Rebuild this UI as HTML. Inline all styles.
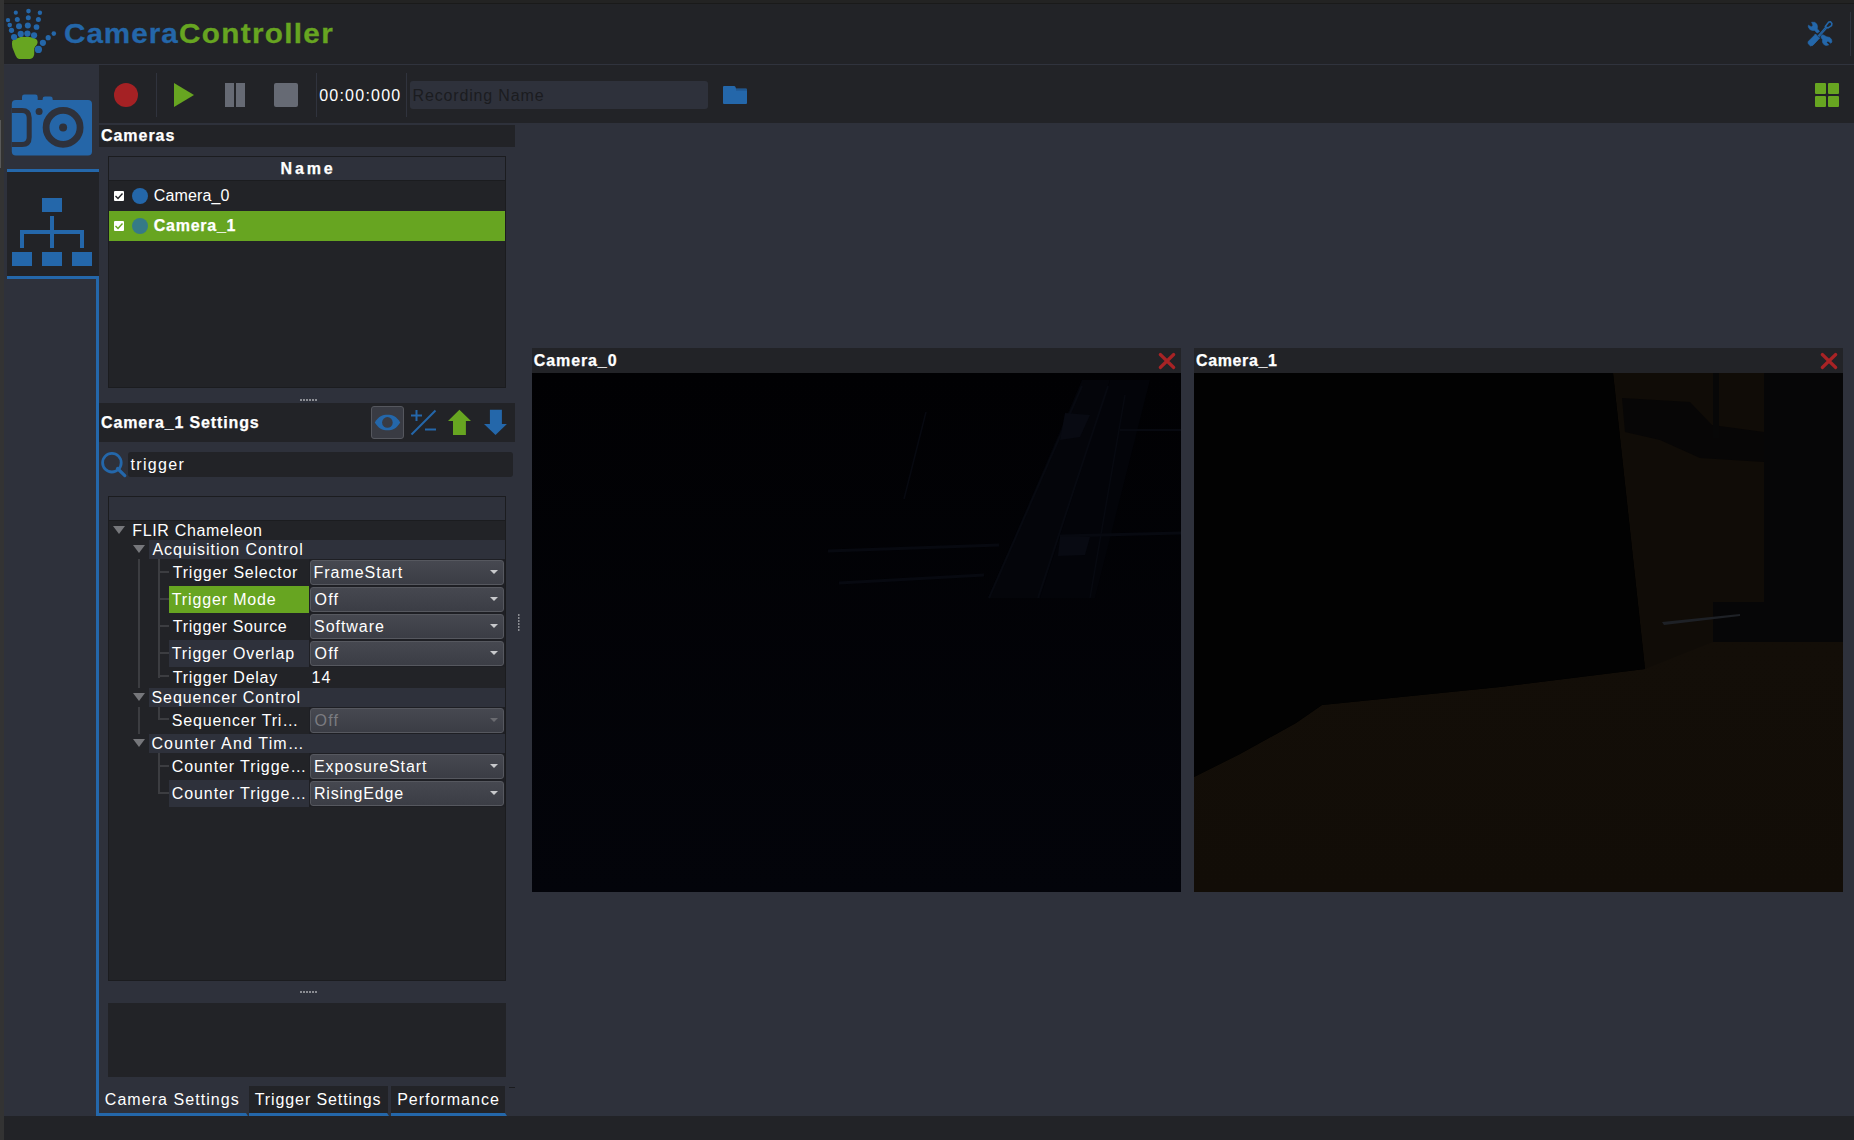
<!DOCTYPE html>
<html><head><meta charset="utf-8">
<style>
html,body{margin:0;padding:0;}
body{width:1854px;height:1140px;overflow:hidden;position:relative;background:#2e313b;font-family:"Liberation Sans",sans-serif;color:#ffffff;}
div{box-sizing:border-box;}
.a{position:absolute;}
.t{position:absolute;white-space:nowrap;font-size:16px;line-height:16px;}
.b{font-weight:bold;-webkit-text-stroke:0.25px #ffffff;}
.dk{background:#222327;}
.dd{position:absolute;left:309px;width:196px;height:27px;background:#1e1f24;}
.dd .in{position:absolute;left:1px;top:1px;width:194px;height:25px;border:1px solid #56585f;border-radius:3px;background:linear-gradient(#464850,#3b3d45);}
.dd .ar{position:absolute;left:181px;top:10.8px;width:0;height:0;border-left:4px solid transparent;border-right:4px solid transparent;border-top:4.8px solid #c8c9cc;}
.vl{position:absolute;width:2px;background:#3c3d41;}
.hl{position:absolute;height:2px;background:#3c3d41;}
.tri{position:absolute;width:0;height:0;border-left:6px solid transparent;border-right:6px solid transparent;border-top:8px solid #76777b;}
.alt{position:absolute;background:#2e313b;}
</style></head><body>
<!-- frame -->
<div class="a" style="left:0;top:0;width:4px;height:1140px;background:#333333;"></div><div class="a" style="left:0;top:120px;width:1px;height:48px;background:#585858;"></div>
<div class="a" style="left:4px;top:0;width:1850px;height:3px;background:#232323;"></div>
<div class="a" style="left:4px;top:3px;width:1850px;height:1px;background:#1a1a1a;"></div>
<!-- header -->
<div class="a dk" style="left:4px;top:4px;width:1850px;height:60px;"></div>
<div class="a" style="left:4px;top:64px;width:1850px;height:1px;background:#30333d;"></div>
<div class="a" style="left:1850px;top:12px;width:1px;height:44px;background:#30333d;"></div>
<!-- toolbar -->
<div class="a dk" style="left:99px;top:65px;width:1755px;height:58px;"></div>
<!-- logo -->
<svg class="a" style="left:0;top:0;" width="64" height="64" viewBox="0 0 64 64">
<path fill="#67a521" d="M12.2,41.0 Q14.5,38.2 18.1,38.0 Q21,36.6 24.3,36.9 Q27.5,36.3 31.0,37.2 Q34.5,37.6 36.6,39.6 Q38.6,42.2 36.6,45.0 Q34.6,46.6 34.3,48.5 L34.2,54.6 Q33.4,58.8 30.0,58.9 L19.0,58.9 Q17.0,58.8 15.6,55.4 L12.4,47.6 Q11.6,44.2 12.2,41.0 Z"/>
<g fill="#2467aa"><circle cx="15.8" cy="12.7" r="2.1"/><circle cx="28.5" cy="11.1" r="2.3"/><circle cx="39.9" cy="12.7" r="2.2"/><circle cx="8.0" cy="20.1" r="2.2"/><circle cx="17.3" cy="19.4" r="2.5"/><circle cx="28.3" cy="17.8" r="2.5"/><circle cx="38.4" cy="19.5" r="2.5"/><circle cx="9.7" cy="25.1" r="2.3"/><circle cx="19.0" cy="26.2" r="3.0"/><circle cx="27.8" cy="25.4" r="3.0"/><circle cx="36.5" cy="27.0" r="2.85"/><circle cx="11.5" cy="30.3" r="2.6"/><circle cx="20.7" cy="33.9" r="3.1"/><circle cx="27.4" cy="33.6" r="3.1"/><circle cx="34.1" cy="35.3" r="3.1"/><circle cx="14.1" cy="37.0" r="3.1"/><circle cx="53.8" cy="33.6" r="2.3"/><circle cx="48.2" cy="37.7" r="2.6"/><circle cx="42.9" cy="42.8" r="3.1"/><circle cx="38.4" cy="49.4" r="3.6"/></g>
</svg>
<div class="t b" style="left:64px;top:19.5px;font-size:28px;line-height:28px;color:#2467aa;letter-spacing:0.9px;transform:scaleX(1.06);transform-origin:0 0;-webkit-text-stroke:0.3px #2467aa;">Camera</div><div class="t b" style="left:178.5px;top:19.5px;font-size:28px;line-height:28px;color:#67a521;letter-spacing:1.25px;transform:scaleX(1.06);transform-origin:0 0;-webkit-text-stroke:0.3px #67a521;">Controller</div>
<!-- tools icon -->
<svg class="a" style="left:1806px;top:20px;" width="28" height="28" viewBox="0 0 28 28">
<g fill="#2467aa">
<path d="M5.58,2.19 L8.74,2.37 L10.84,4.12 L11.54,6.58 L11.19,9.04 L12.95,10.44 L13.47,11.49 L11.54,12.89 L10.49,12.54 L8.74,10.44 L6.28,10.44 L3.82,9.39 L2.25,6.93 L2.42,5.18 L5.4,6.9 L7.0,5.2 Z" stroke="#2467aa" stroke-width="0.6" stroke-linejoin="round"/>
<path d="M15.05,16.05 L16.81,14.65 L20.67,16.75 L23.82,17.46 L25.58,19.56 L25.93,22.02 L24.88,23.3 L21.8,21.0 L20.6,22.6 L22.77,24.9 L19.96,25.53 L17.86,24.47 L16.46,22.37 L16.46,19.56 L15.05,17.46 Z" stroke="#2467aa" stroke-width="0.6" stroke-linejoin="round"/>
<path d="M2.07,21.67 L8.74,15.0 L9.44,13.95 L13.65,18.16 L12.25,19.56 L6.98,25.18 L4.53,25.88 L2.25,23.77 Z" stroke="#2467aa" stroke-width="0.8" stroke-linejoin="round"/>
</g>
<path d="M12.6,16.2 L20.2,7.6" stroke="#2467aa" stroke-width="2.4"/>
<path d="M13.2,15.6 L19.8,8.2" stroke="#1d4f84" stroke-width="0.7"/>
<path d="M19.26,6.58 L22.77,2.02 L24.53,1.84 L25.93,3.42 L25.58,5.53 L22.07,7.98 Z" fill="#222327" stroke="#2467aa" stroke-width="1.5" stroke-linejoin="round"/>
</svg>
<!-- toolbar buttons -->
<div class="a" style="left:114px;top:83px;width:24px;height:24px;border-radius:50%;background:#a52124;"></div>
<div class="a" style="left:156px;top:73px;width:1px;height:44px;background:#30333d;"></div>
<svg class="a" style="left:173px;top:82px;" width="22" height="26" viewBox="0 0 22 26"><polygon points="1,1 21,13 1,25" fill="#67a521"/></svg>
<div class="a" style="left:225px;top:83px;width:9px;height:24px;background:#666a74;"></div>
<div class="a" style="left:236px;top:83px;width:9px;height:24px;background:#666a74;"></div>
<div class="a" style="left:274px;top:83px;width:24px;height:24px;border-radius:2px;background:#666a74;"></div>
<div class="a" style="left:316px;top:73px;width:1px;height:44px;background:#30333d;"></div>
<div class="t" style="left:319.2px;top:87.8px;letter-spacing:1.23px;color:#ffffff;">00:00:000</div>
<div class="a" style="left:406px;top:73px;width:1px;height:44px;background:#30333d;"></div>
<div class="a" style="left:410px;top:81px;width:298px;height:28px;border-radius:3px;background:#2e313b;"></div>
<div class="t" style="left:412.5px;top:87.7px;letter-spacing:0.85px;color:#1b1c20;">Recording Name</div>
<svg class="a" style="left:723px;top:86px;" width="24" height="18" viewBox="0 0 24 18"><path d="M0,1 Q0,0 1,0 L11,0 Q12,0 12.5,1 L13,2.5 L23,2.5 Q24,2.5 24,3.5 L24,17 Q24,18 23,18 L1,18 Q0,18 0,17 Z" fill="#2467aa"/><rect x="13" y="3.4" width="11" height="1" fill="#1d4d80"/></svg>
<svg class="a" style="left:1815px;top:83px;" width="24" height="24" viewBox="0 0 24 24"><g fill="#67a521"><rect x="0" y="0" width="11" height="11" rx="1"/><rect x="13" y="0" width="11" height="11" rx="1"/><rect x="0" y="13" width="11" height="11" rx="1"/><rect x="13" y="13" width="11" height="11" rx="1"/></g></svg>
<!-- sidebar -->
<svg class="a" style="left:0;top:88px;" width="100" height="72" viewBox="0 88 100 72">
<path fill="#2566a8" d="M22,100 L22,97 Q22,94.6 24.4,94.6 L35.3,94.6 Q37.7,94.6 37.7,97 L37.7,100 L42.6,100 L42.6,99 Q42.6,96.6 45,96.6 L50.3,96.6 Q52.7,96.6 52.7,99 L52.7,100 L88,100 Q92,100 92,104 L92,151.4 Q92,155.4 88,155.4 L15.8,155.4 Q11.8,155.4 11.8,151.4 L11.8,104 Q11.8,100 15.8,100 Z"/>
<path fill="none" stroke="#2e313b" stroke-width="5" d="M11.8,110.5 L22,110.5 Q29.2,110.5 29.2,117.7 L29.2,137.3 Q29.2,144.6 22,144.6 L11.8,144.6"/>
<circle cx="39.1" cy="111.6" r="3.5" fill="#2e313b"/>
<circle cx="63.1" cy="127.4" r="17" fill="none" stroke="#2e313b" stroke-width="6.8"/>
<circle cx="63.1" cy="127.4" r="4" fill="#2e313b"/>
</svg>
<div class="a" style="left:7px;top:169px;width:92px;height:3px;background:#2467aa;"></div>
<div class="a dk" style="left:7px;top:172px;width:92px;height:104px;"></div>
<div class="a" style="left:7px;top:276px;width:92px;height:3px;background:#2467aa;"></div>
<div class="a" style="left:96px;top:276px;width:3px;height:840px;background:#2467aa;"></div>
<svg class="a" style="left:0;top:190px;" width="100" height="80" viewBox="0 190 100 80">
<g fill="#2467aa">
<rect x="42" y="198" width="20" height="14"/>
<rect x="50" y="216" width="4" height="32"/>
<rect x="20" y="230" width="64" height="4"/>
<rect x="20" y="230" width="4" height="18"/>
<rect x="80" y="230" width="4" height="18"/>
<rect x="12" y="252" width="20" height="14"/>
<rect x="42" y="252" width="20" height="14"/>
<rect x="72" y="252" width="20" height="14"/>
</g></svg>
<!-- cameras panel -->
<div class="a dk" style="left:99px;top:125px;width:416px;height:22px;"></div>
<div class="t b" style="left:101.0px;top:128.0px;letter-spacing:0.96px;">Cameras</div>
<div class="a" style="left:108px;top:156px;width:398px;height:232px;border:1px solid #1b1c1f;background:#222327;"></div>
<div class="a" style="left:109px;top:157px;width:396px;height:23px;background:#2e313b;"></div>
<div class="a" style="left:109px;top:180px;width:396px;height:1px;background:#1b1c1f;"></div>
<div class="t b" style="left:280.6px;top:161.2px;letter-spacing:2.86px;">Name</div>
<div class="a" style="left:109px;top:211px;width:396px;height:30px;background:#67a521;"></div>
<div class="a" style="left:114px;top:191px;width:10px;height:10px;background:#ffffff;border-radius:1px;"></div>
<svg class="a" style="left:114px;top:191px;" width="10" height="10" viewBox="0 0 10 10"><path d="M1.5,5 L4,7.5 L8.5,2.5" fill="none" stroke="#222327" stroke-width="1.4"/></svg>
<div class="a" style="left:132px;top:188px;width:16px;height:16px;border-radius:50%;background:#2467aa;"></div>
<div class="t" style="left:153.8px;top:188.2px;letter-spacing:0.14px;">Camera_0</div>
<div class="a" style="left:114px;top:221px;width:10px;height:10px;background:#ffffff;border-radius:1px;"></div>
<svg class="a" style="left:114px;top:221px;" width="10" height="10" viewBox="0 0 10 10"><path d="M1.5,5 L4,7.5 L8.5,2.5" fill="none" stroke="#67a521" stroke-width="1.4"/></svg>
<div class="a" style="left:132px;top:218px;width:16px;height:16px;border-radius:50%;background:#357a87;"></div>
<div class="t b" style="left:153.8px;top:218.2px;letter-spacing:0.74px;">Camera_1</div>
<!-- splitter handle -->
<svg class="a" style="left:298px;top:397px;" width="22" height="6" viewBox="0 0 22 6"><g fill="#8a8c92"><rect x="2" y="2" width="2" height="2"/><rect x="5" y="2" width="2" height="2"/><rect x="8" y="2" width="2" height="2"/><rect x="11" y="2" width="2" height="2"/><rect x="14" y="2" width="2" height="2"/><rect x="17" y="2" width="2" height="2"/></g></svg>
<!-- settings -->
<div class="a dk" style="left:99px;top:403px;width:416px;height:39px;"></div>
<div class="t b" style="left:101.0px;top:414.9px;letter-spacing:0.85px;">Camera_1 Settings</div>
<div class="a" style="left:371px;top:406px;width:33px;height:33px;border:1px solid #55575e;border-radius:3px;background:#393b43;"></div>
<svg class="a" style="left:370px;top:405px;" width="140" height="36" viewBox="370 405 140 36">
<path d="M374.8,422.4 C378.5,416.5 382.5,414.8 387.5,414.8 C392.5,414.8 396.5,416.5 400.2,422.4 C396.5,428.5 392.5,430.2 387.5,430.2 C382.5,430.2 378.5,428.5 374.8,422.4 Z" fill="#2467aa"/>
<circle cx="387.4" cy="422.4" r="5.3" fill="#393b43"/>
<g stroke="#2467aa" stroke-width="2" fill="none"><path d="M411,415.5 L422,415.5 M416.5,410 L416.5,421"/><path d="M425,429.5 L436,429.5"/><path d="M411.5,434.5 L435.5,410.5"/></g>
<polygon fill="#67a521" points="459.4,409.8 471,420.9 465.9,420.9 465.9,435.1 453,435.1 453,420.9 448,420.9"/>
<polygon fill="#2467aa" points="489.9,409.8 501.9,409.8 501.9,423.9 506.9,423.9 495.5,435.1 484,423.9 489.9,423.9"/>
</svg>
<svg class="a" style="left:100px;top:450px;" width="28" height="28" viewBox="100 450 28 28"><circle cx="111.9" cy="462.7" r="9.3" fill="none" stroke="#2467aa" stroke-width="2.8"/><path d="M117.5,468.5 L124.8,475.6" stroke="#2467aa" stroke-width="3.2" stroke-linecap="round"/></svg>
<div class="a dk" style="left:128px;top:452px;width:385px;height:25px;border-radius:3px;"></div>
<div class="t" style="left:130.6px;top:457.2px;letter-spacing:1.30px;">trigger</div>
<!-- property tree -->
<div class="a" style="left:108px;top:496px;width:398px;height:485px;border:1px solid #1b1c1f;background:#222327;"></div>
<div class="a" style="left:109px;top:497px;width:396px;height:23px;background:#2e313b;"></div>
<div class="a" style="left:109px;top:520px;width:396px;height:1px;background:#1b1c1f;"></div>
<!-- alt rows -->
<div class="alt" style="left:149px;top:540px;width:356px;height:19px;"></div>
<div class="a" style="left:169px;top:586px;width:336px;height:27px;background:#67a521;"></div>
<div class="alt" style="left:169px;top:640px;width:336px;height:27px;"></div>
<div class="alt" style="left:149px;top:688px;width:356px;height:19px;"></div>
<div class="alt" style="left:149px;top:734px;width:356px;height:19px;"></div>
<div class="alt" style="left:169px;top:780px;width:336px;height:27px;"></div>
<!-- tree lines -->
<div class="vl" style="left:138px;top:559px;height:129px;"></div>
<div class="vl" style="left:138px;top:707px;height:27px;"></div>
<div class="vl" style="left:158px;top:559px;height:119px;"></div>
<div class="hl" style="left:158px;top:571px;width:11px;"></div>
<div class="hl" style="left:158px;top:598px;width:11px;"></div>
<div class="hl" style="left:158px;top:625px;width:11px;"></div>
<div class="hl" style="left:158px;top:652px;width:11px;"></div>
<div class="hl" style="left:158px;top:675px;width:11px;"></div>
<div class="vl" style="left:158px;top:707px;height:13px;"></div>
<div class="hl" style="left:158px;top:718px;width:11px;"></div>
<div class="vl" style="left:158px;top:753px;height:41px;"></div>
<div class="hl" style="left:158px;top:765px;width:11px;"></div>
<div class="hl" style="left:158px;top:792px;width:11px;"></div>
<!-- triangles -->
<div class="tri" style="left:113px;top:526px;"></div>
<div class="tri" style="left:133px;top:545px;"></div>
<div class="tri" style="left:133px;top:693px;"></div>
<div class="tri" style="left:133px;top:739px;"></div>
<!-- labels -->
<div class="t" style="left:132.2px;top:523.0px;letter-spacing:0.68px;">FLIR Chameleon</div>
<div class="t" style="left:152.4px;top:542.0px;letter-spacing:0.94px;">Acquisition Control</div>
<div class="t" style="left:172.8px;top:565.1px;letter-spacing:0.76px;">Trigger Selector</div>
<div class="t" style="left:171.8px;top:592.0px;letter-spacing:0.85px;">Trigger Mode</div>
<div class="t" style="left:172.8px;top:619.0px;letter-spacing:0.67px;">Trigger Source</div>
<div class="t" style="left:171.8px;top:646.0px;letter-spacing:0.84px;">Trigger Overlap</div>
<div class="t" style="left:172.8px;top:670.0px;letter-spacing:0.75px;">Trigger Delay</div>
<div class="t" style="left:151.4px;top:690.0px;letter-spacing:0.96px;">Sequencer Control</div>
<div class="t" style="left:171.8px;top:713.0px;letter-spacing:0.83px;">Sequencer Tri…</div>
<div class="t" style="left:151.4px;top:735.9px;letter-spacing:1.15px;">Counter And Tim…</div>
<div class="t" style="left:171.8px;top:758.9px;letter-spacing:0.90px;">Counter Trigge…</div>
<div class="t" style="left:171.8px;top:786.0px;letter-spacing:0.90px;">Counter Trigge…</div>
<!-- dropdowns -->
<div class="dd" style="top:559px;"><div class="in"></div><div class="ar"></div></div>
<div class="t" style="left:313.6px;top:564.8px;letter-spacing:0.96px;">FrameStart</div>
<div class="dd" style="top:586px;"><div class="in"></div><div class="ar"></div></div>
<div class="t" style="left:314.6px;top:592.0px;letter-spacing:1.20px;">Off</div>
<div class="dd" style="top:613px;"><div class="in"></div><div class="ar"></div></div>
<div class="t" style="left:314.0px;top:619.0px;letter-spacing:0.97px;">Software</div>
<div class="dd" style="top:640px;"><div class="in"></div><div class="ar"></div></div>
<div class="t" style="left:314.6px;top:646.0px;letter-spacing:1.20px;">Off</div>
<div class="t" style="left:311.4px;top:669.7px;letter-spacing:1.10px;">14</div>
<div class="dd" style="top:707px;"><div class="in"></div><div class="ar" style="border-top-color:#6a6b70;"></div></div>
<div class="t" style="left:314.6px;top:712.7px;letter-spacing:1.20px;color:#7b7c81;">Off</div>
<div class="dd" style="top:753px;"><div class="in"></div><div class="ar"></div></div>
<div class="t" style="left:314.0px;top:758.6px;letter-spacing:0.92px;">ExposureStart</div>
<div class="dd" style="top:780px;"><div class="in"></div><div class="ar"></div></div>
<div class="t" style="left:314.0px;top:785.7px;letter-spacing:0.80px;">RisingEdge</div>
<!-- vertical splitter handle -->
<svg class="a" style="left:516px;top:612px;" width="6" height="22" viewBox="0 0 6 22"><g fill="#8a8c92"><rect x="2" y="2" width="1.5" height="2"/><rect x="2" y="5" width="1.5" height="2"/><rect x="2" y="8" width="1.5" height="2"/><rect x="2" y="11" width="1.5" height="2"/><rect x="2" y="14" width="1.5" height="2"/><rect x="2" y="17" width="1.5" height="2"/></g></svg>
<!-- second splitter -->
<svg class="a" style="left:298px;top:989px;" width="22" height="6" viewBox="0 0 22 6"><g fill="#8a8c92"><rect x="2" y="2" width="2" height="2"/><rect x="5" y="2" width="2" height="2"/><rect x="8" y="2" width="2" height="2"/><rect x="11" y="2" width="2" height="2"/><rect x="14" y="2" width="2" height="2"/><rect x="17" y="2" width="2" height="2"/></g></svg>
<div class="a dk" style="left:108px;top:1003px;width:398px;height:74px;"></div>
<!-- tabs -->
<div class="a dk" style="left:249px;top:1086px;width:139px;height:27px;"></div>
<div class="a dk" style="left:391px;top:1086px;width:114px;height:27px;"></div>
<div class="a" style="left:509px;top:1087px;width:6px;height:1px;background:#1b1c1f;"></div>
<svg class="a" style="left:96px;top:1112px;" width="414" height="4" viewBox="96 1112 414 4"><g fill="#2467aa"><polygon points="96,1113 246,1113 248,1116 96,1116"/><polygon points="249,1113 387,1113 389,1116 249,1116"/><polygon points="391,1113 505,1113 507,1116 391,1116"/></g></svg>
<div class="t" style="left:104.8px;top:1091.5px;letter-spacing:1.05px;">Camera Settings</div>
<div class="t" style="left:254.8px;top:1091.5px;letter-spacing:0.89px;">Trigger Settings</div>
<div class="t" style="left:397.2px;top:1091.5px;letter-spacing:1.00px;">Performance</div>
<!-- camera views -->
<div class="a dk" style="left:532px;top:348px;width:649px;height:25px;"></div>
<div class="t b" style="left:533.8px;top:353.0px;letter-spacing:0.89px;">Camera_0</div>
<svg class="a" style="left:1157px;top:351px;" width="20" height="20" viewBox="0 0 20 20"><path d="M3.3,3.5 L16.7,16.5 M16.7,3.5 L3.3,16.5" stroke="#a82325" stroke-width="3.2" stroke-linecap="round"/></svg>
<svg class="a" style="left:532px;top:373px;" width="649" height="519" viewBox="532 373 649 519">
<defs><linearGradient id="c0g" x1="0" y1="0" x2="0" y2="1"><stop offset="0" stop-color="#010103"/><stop offset="1" stop-color="#03040a"/></linearGradient></defs><rect x="532" y="373" width="649" height="519" fill="url(#c0g)"/>
<polygon fill="#04050a" points="1082,380 1110,380 1040,598 988,598"/>
<polygon fill="#030409" points="1110,380 1150,380 1095,598 1040,598"/>
<g stroke="#070910" fill="none">
<path d="M1082,386 L989,598" stroke-width="2"/>
<path d="M1108,386 L1038,598" stroke-width="2"/>
<path d="M1125,395 L1090,598" stroke-width="1.5"/>
<path d="M828,551 L999,545" stroke-width="3"/>
<path d="M839,583 L984,575" stroke-width="3"/>
<path d="M1060,536 L1181,533" stroke-width="3"/>
<path d="M904,499 L926,412" stroke-width="1.5"/>
<path d="M1120,430 L1181,430" stroke-width="2"/>
</g>
<polygon fill="#080a12" points="1060,537 1090,537 1085,555 1058,556"/>
<polygon fill="#080a12" points="1065,413 1090,415 1080,437 1060,440"/>
</svg>
<div class="a dk" style="left:1194px;top:348px;width:649px;height:25px;"></div>
<div class="t b" style="left:1196.0px;top:353.0px;letter-spacing:0.63px;">Camera_1</div>
<svg class="a" style="left:1819px;top:351px;" width="20" height="20" viewBox="0 0 20 20"><path d="M3.3,3.5 L16.7,16.5 M16.7,3.5 L3.3,16.5" stroke="#a82325" stroke-width="3.2" stroke-linecap="round"/></svg>
<svg class="a" style="left:1194px;top:373px;" width="649" height="519" viewBox="1194 373 649 519">
<defs><linearGradient id="gnd" x1="0" y1="0" x2="0" y2="1"><stop offset="0" stop-color="#130e08"/><stop offset="1" stop-color="#120d07"/></linearGradient></defs>
<rect x="1194" y="373" width="649" height="519" fill="#020202"/>
<polygon fill="#100c07" points="1613,373 1843,373 1843,650 1645,669"/>
<polygon fill="#060607" points="1764,373 1843,373 1843,642 1713,642 1713,602 1764,602"/>
<polygon fill="#070606" points="1622,398 1690,402 1712,425 1764,432 1764,462 1700,458 1660,440 1625,432"/>
<rect x="1713" y="373" width="6" height="65" fill="#070707"/>
<polygon fill="url(#gnd)" points="1194,777 1240,754 1296,723 1322,705 1500,687 1645,669 1713,642 1843,642 1843,892 1194,892"/>
<polygon fill="#020202" points="1613,373 1645,669 1500,687 1322,705 1296,723 1240,754 1194,777 1194,373"/>
<polygon fill="#1e2126" points="1662,622 1740,614 1740,616 1664,625"/>
</svg>
<!-- status bar -->
<div class="a dk" style="left:4px;top:1116px;width:1850px;height:24px;"></div>
</body></html>
